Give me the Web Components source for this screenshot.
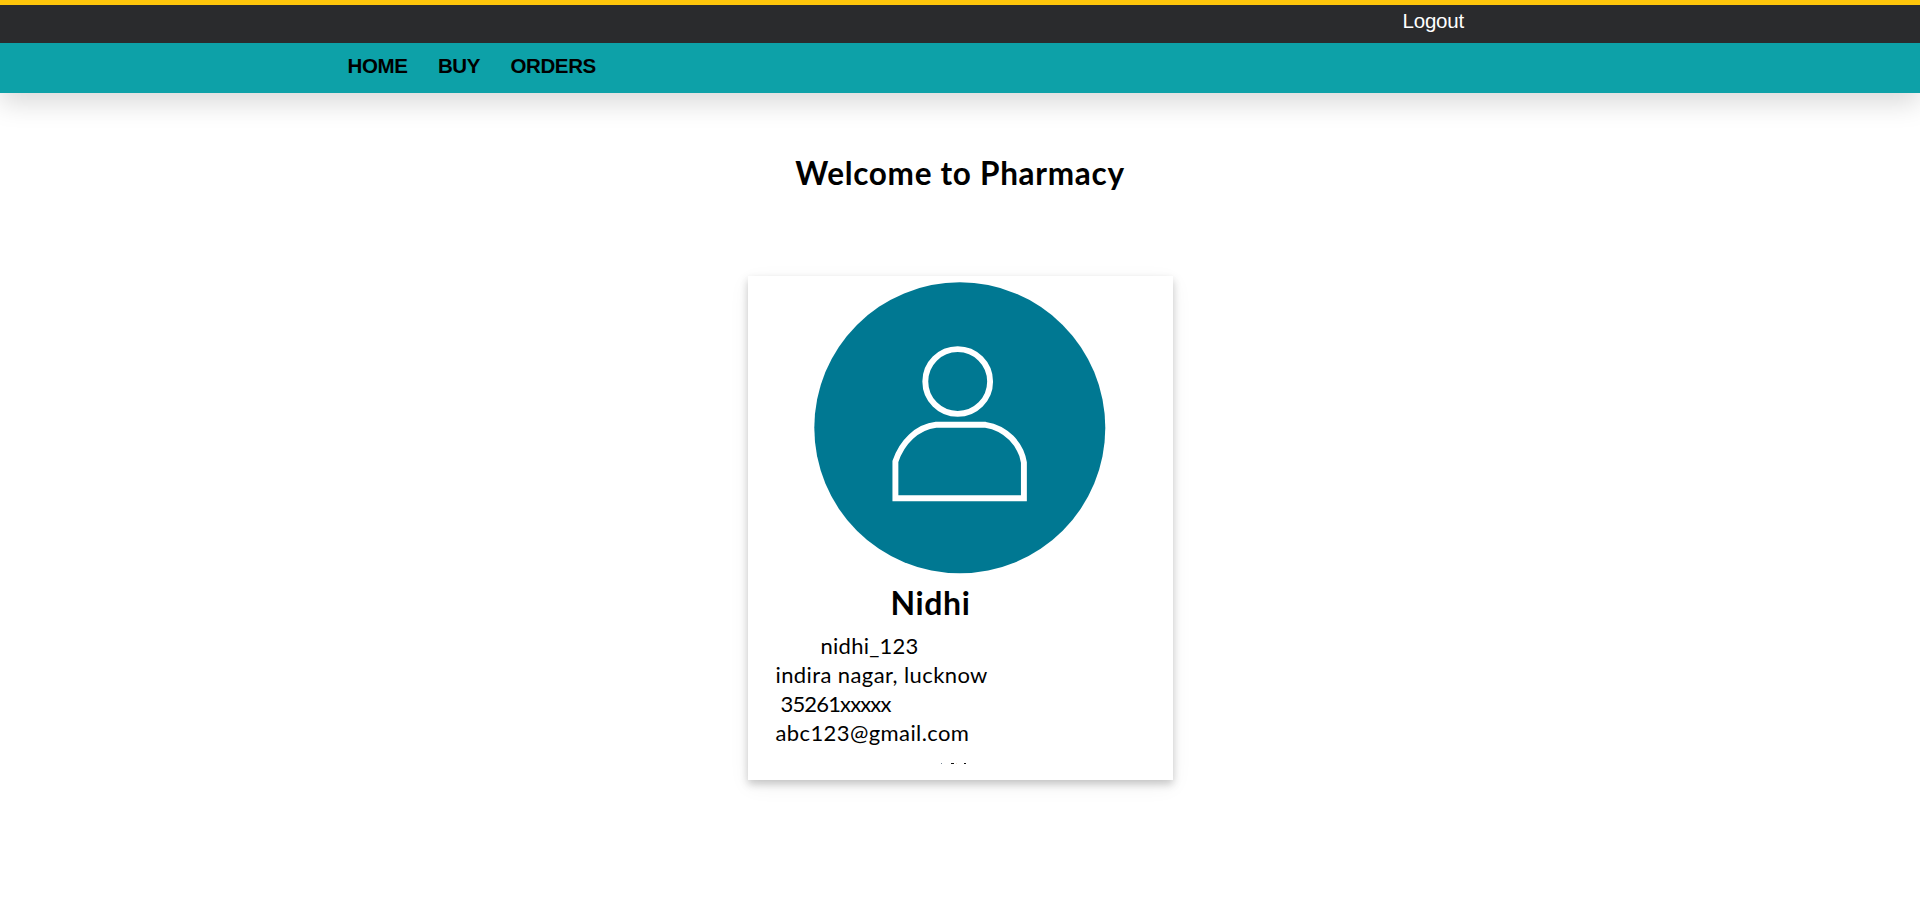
<!DOCTYPE html>
<html lang="en">
<head>
<meta charset="utf-8">
<title>Pharmacy</title>
<style>
html, body { margin: 0; background: #fff; }
body { height: 902px; overflow: hidden; }
</style>
</head>
<body>
<pharmacy-page></pharmacy-page>
<script>
const define = (name, html) => {
  const t = document.createElement('template');
  t.innerHTML = html;
  customElements.define(name, class extends HTMLElement {
    constructor() {
      super();
      this.attachShadow({ mode: 'open' }).append(t.content.cloneNode(true));
    }
  });
};

define('top-bar', `
<style>
:host { display: flex; justify-content: flex-end; box-sizing: border-box; height: 43px;
  border-top: 5px solid #fdc50b; background: #2a2b2d; padding: 4px 456px 0 0; }
a { color: #fff; font: 20.5px/24px "Liberation Sans", Arial, sans-serif; letter-spacing: -.2px; text-decoration: none; }
</style><a><slot></slot></a>`);

define('nav-link', `
<style>
:host { display: block; font: bold 20.5px/24px "Liberation Sans", Arial, sans-serif; letter-spacing: -.4px; color: #000; }
</style><slot></slot>`);

define('nav-bar', `
<style>
:host { display: block; height: 50px; background: #0da1a8; }
nav { display: flex; gap: 30.5px; padding: 11px 0 0 347.5px; }
</style><nav><slot></slot></nav>`);

define('page-header', `
<style>
:host { display: block; box-shadow: 0 10px 25px rgba(0,0,0,.15); }
</style><slot></slot>`);

define('user-avatar', `
<style>
:host { display: block; width: 292px; height: 292px; }
svg { display: block; }
</style>
<svg width="292" height="292" viewBox="0 0 292 292" fill="none" stroke="#fff" stroke-width="5.9">
<circle cx="145.8" cy="145.8" r="145.5" fill="#007892" stroke="none"/>
<circle cx="143.7" cy="99.5" r="32.4"/>
<path d="M81.4 216.3V179.5C88 160 103 145 122 142.8H171.5C192 146 207 162 209.9 180.5V216.3Z"/>
</svg>`);

define('text-line', `
<style>
:host { display: block; height: 29px; line-height: 29px; white-space: nowrap; }
</style><slot></slot>`);

define('cut-line', `
<style>
:host { display: block; height: 1px; margin-top: 16px; padding-left: 165px; }
svg { display: block; }
</style>
<svg width="27" height="1" aria-hidden="true"><path fill="#789" d="M0 0h1v1H0z"/><path fill="#111" d="M10 0h3v1h-3zM23 0h2v1h-2z"/><path fill="#f2e6d0" d="M15 0h1v1h-1z"/></svg>`);

define('profile-card', `
<style>
:host { display: block; box-sizing: border-box; width: 425px; height: 504px; background: #fff; padding-top: 6px;
  box-shadow: 0 4px 8px rgba(0,0,0,.2), 0 6px 20px rgba(0,0,0,.06); font: 22px Lato, Carlito, sans-serif; color: #000; }
user-avatar { margin-left: 66px; }
h2 { margin: 9px 0 8px 143px; font: bold 32px/40px Lato, Carlito, sans-serif; letter-spacing: .6px; }
.details { padding-left: 28px; }
</style>
<user-avatar></user-avatar>
<h2><slot name="name"></slot></h2>
<div class="details"><slot></slot><cut-line></cut-line></div>`);

define('pharmacy-page', `
<style>
:host { display: block; }
main { display: flex; flex-direction: column; align-items: center; }
h1 { margin: 60px 0 83px; font: bold 31.5px/40px Lato, Carlito, sans-serif; letter-spacing: .7px; color: #000; }
.user { padding-left: 45px; letter-spacing: .25px; }
.addr { letter-spacing: .4px; }
.phone { padding-left: 5px; letter-spacing: -.85px; }
.mail { letter-spacing: .4px; }
</style>
<page-header>
<top-bar>Logout</top-bar>
<nav-bar><nav-link>HOME</nav-link><nav-link>BUY</nav-link><nav-link>ORDERS</nav-link></nav-bar>
</page-header>
<main>
<h1>Welcome to Pharmacy</h1>
<profile-card>
<span slot="name">Nidhi</span>
<text-line class="user">nidhi_123</text-line>
<text-line class="addr">indira nagar, lucknow</text-line>
<text-line class="phone">35261xxxxx</text-line>
<text-line class="mail">abc123@gmail.com</text-line>
</profile-card>
</main>`);
</script>
</body>
</html>
